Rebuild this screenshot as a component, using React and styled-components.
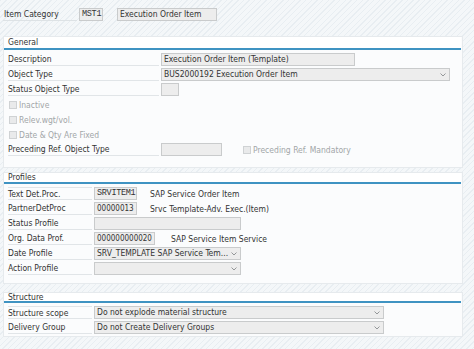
import styled, { createGlobalStyle } from 'styled-components';

const GlobalStyle = createGlobalStyle`
  html, body {
    margin: 0;
    padding: 0;
  }
  body {
    width: 474px;
    height: 349px;
    overflow: hidden;
    background-color: #f4f7f9;
    background-image: repeating-linear-gradient(135deg, rgba(210,220,228,0.35) 0 1px, transparent 1px 4px);
    font-family: "DejaVu Sans Condensed", "DejaVu Sans", sans-serif;
    font-stretch: condensed;
    font-size: 8.5px;
    color: #333;
  }
`;

const Page = styled.div`
  padding: 8px 11px 0 3px;
  display: flex;
  flex-direction: column;
`;

const TopRow = styled.div`
  display: flex;
  align-items: center;
  height: 13px;
  margin-bottom: 15px;
`;

const TopLabel = styled.div`
  width: 74px;
  padding-left: 1px;
  height: 13px;
  line-height: 13px;
  border-bottom: 1px solid #dde2e5;
  box-sizing: border-box;
  margin-right: 2px;
`;

const Panel = styled.section`
  background: #fbfcfd;
  border: 1px solid #e6eaed;
  margin-bottom: ${p => p.$gap || 0}px;
  padding-bottom: ${p => p.$pb || 0}px;
`;

const Header = styled.div`
  height: ${p => p.$h || 11}px;
  line-height: ${p => p.$h || 11}px;
  padding-left: 4px;
  background: #ffffff;
  border-bottom: 2px solid #3f93c2;
  margin: 0 1px 3px 0;
`;

const Body = styled.div`
  display: flex;
  flex-direction: column;
  gap: 2px;
  padding-left: 4px;
`;

const Row = styled.div`
  display: flex;
  align-items: center;
  height: 13px;
`;

const Label = styled.div`
  width: ${p => p.$w}px;
  flex: none;
  height: 13px;
  line-height: 13px;
  box-sizing: border-box;
  border-bottom: 1px solid #e1e5e8;
  border-top: ${p => (p.$boxed ? '1px solid #e1e5e8' : 'none')};
  margin-right: 2px;
  white-space: nowrap;
`;

const Field = styled.div`
  width: ${p => p.$w}px;
  flex: none;
  height: 13px;
  box-sizing: border-box;
  background: #ededed;
  border: 1px solid #c9cbcc;
  padding-left: 2px;
  line-height: 11px;
  white-space: nowrap;
  overflow: hidden;
  font-family: ${p => (p.$mono ? '"Liberation Mono", monospace' : 'inherit')};
  font-size: ${p => (p.$mono ? '8.5px' : p.$small ? '8px' : 'inherit')};
  letter-spacing: ${p => (p.$mono ? '-0.3px' : 'normal')};
  color: #333;
`;

const Select = styled(Field)`
  display: flex;
  align-items: center;
  justify-content: space-between;
  padding-right: 3px;
`;

const Text = styled.span`
  margin-left: ${p => p.$ml || 0}px;
  white-space: nowrap;
`;

const CheckRow = styled.label`
  display: flex;
  align-items: center;
  gap: 2px;
  color: #a2a6a8;
  margin-left: ${p => p.$ml || 0}px;
  height: 13px;
`;

const Box = styled.span`
  width: 8px;
  height: 8px;
  box-sizing: border-box;
  border: 1px solid #cfd2d4;
  background: #e9eaeb;
  margin-left: 1px;
`;

const Chevron = () => (
  <svg width="6" height="4" viewBox="0 0 6 4">
    <polyline points="0.5,0.5 3,3 5.5,0.5" fill="none" stroke="#8a8d90" strokeWidth="0.9" />
  </svg>
);

const Check = ({ children, ml }) => (
  <CheckRow $ml={ml}>
    <Box />
    {children}
  </CheckRow>
);

export default function App() {
  return (
    <>
      <GlobalStyle />
      <Page>
        <TopRow>
          <TopLabel>Item Category</TopLabel>
          <Field $w={24} $mono>MST1</Field>
          <Field $w={100} style={{ marginLeft: 14 }}>Execution Order Item</Field>
        </TopRow>

        <Panel $gap={4} $pb={11}>
          <Header $h={11}>General</Header>
          <Body>
            <Row>
              <Label $w={151}>Description</Label>
              <Field $w={194}>Execution Order Item (Template)</Field>
            </Row>
            <Row>
              <Label $w={151}>Object Type</Label>
              <Select $w={289}>
                <span>BUS2000192 Execution Order Item</span>
                <Chevron />
              </Select>
            </Row>
            <Row>
              <Label $w={151}>Status Object Type</Label>
              <Field $w={18} />
            </Row>
            <Row>
              <Check>Inactive</Check>
            </Row>
            <Row>
              <Check>Relev.wgt/vol.</Check>
            </Row>
            <Row>
              <Check>Date &amp; Qty Are Fixed</Check>
            </Row>
            <Row>
              <Label $w={151}>Preceding Ref. Object Type</Label>
              <Field $w={61} />
              <Check ml={20}>Preceding Ref. Mandatory</Check>
            </Row>
          </Body>
        </Panel>

        <Panel $gap={8} $pb={8}>
          <Header $h={9}>Profiles</Header>
          <Body>
            <Row>
              <Label $w={84} $boxed>Text Det.Proc.</Label>
              <Field $w={43} $mono>SRVITEM1</Field>
              <Text $ml={13}>SAP Service Order Item</Text>
            </Row>
            <Row>
              <Label $w={84}>PartnerDetProc</Label>
              <Field $w={43} $small>00000013</Field>
              <Text $ml={13}>Srvc Template-Adv. Exec.(Item)</Text>
            </Row>
            <Row>
              <Label $w={84}>Status Profile</Label>
              <Field $w={147} />
            </Row>
            <Row>
              <Label $w={84}>Org. Data Prof.</Label>
              <Field $w={61} $small>000000000020</Field>
              <Text $ml={16}>SAP Service Item Service</Text>
            </Row>
            <Row>
              <Label $w={84}>Date Profile</Label>
              <Select $w={147}>
                <span>SRV_TEMPLATE SAP Service Tem...</span>
                <Chevron />
              </Select>
            </Row>
            <Row>
              <Label $w={84}>Action Profile</Label>
              <Select $w={147}>
                <span />
                <Chevron />
              </Select>
            </Row>
          </Body>
        </Panel>

        <Panel $pb={2}>
          <Header $h={8}>Structure</Header>
          <Body>
            <Row>
              <Label $w={84} $boxed>Structure scope</Label>
              <Select $w={290}>
                <span>Do not explode material structure</span>
                <Chevron />
              </Select>
            </Row>
            <Row>
              <Label $w={84}>Delivery Group</Label>
              <Select $w={290}>
                <span>Do not Create Delivery Groups</span>
                <Chevron />
              </Select>
            </Row>
          </Body>
        </Panel>
      </Page>
    </>
  );
}
